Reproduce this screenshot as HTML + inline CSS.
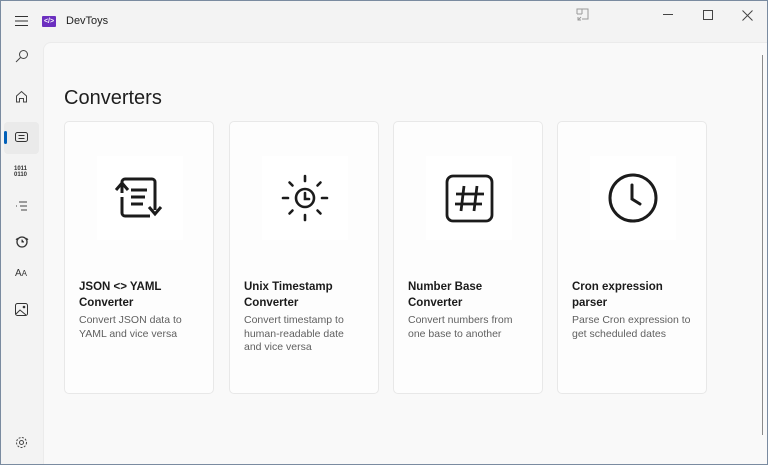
<!DOCTYPE html>
<html><head><style>
*{margin:0;padding:0;box-sizing:border-box}
body{width:768px;height:465px;overflow:hidden;background:#f3f3f3;font-family:"Segoe UI","Liberation Sans",sans-serif;position:relative;color:#1b1b1b}
.frame{position:absolute;inset:0;border:1px solid #7a8ba0;pointer-events:none;z-index:10}
.content{position:absolute;left:43px;top:42px;right:1px;bottom:1px;background:#f9f9f9;border-top:1px solid #ebebeb;border-left:1px solid #ebebeb;border-top-left-radius:8px}
h1{position:absolute;left:64px;top:87px;font-size:20px;font-weight:400;color:#1f1f1f}
.card{position:absolute;top:121px;width:150px;height:273px;background:#fdfdfd;border:1px solid #e8e8e8;border-radius:5px}
.ic{position:absolute;left:32px;top:34px;width:86px;height:84px;background:#fff;display:flex;align-items:center;justify-content:center}
.t{position:absolute;left:14px;top:158px;font-size:11.5px;font-weight:700;line-height:15.5px;width:125px}
.d{position:absolute;left:14px;top:192px;font-size:10.5px;color:#606060;line-height:13.5px;width:112px}
.sel{position:absolute;left:4px;top:122px;width:35px;height:32px;background:#eaeaea;border-radius:4px}
.bar{position:absolute;left:4px;top:131px;width:3px;height:13px;background:#005fb8;border-radius:2px}
</style></head><body>
<div class="frame"></div>
<svg style="position:absolute;left:14px;top:15px" width="15" height="12"><path d="M1 1.5h13M1 6h13M1 10.5h13" stroke="#333" stroke-width="1.1"/></svg>
<div style="position:absolute;left:42px;top:16px;width:14px;height:11px;background:#6b2fbf;border-radius:1px;color:#fff;font-size:7px;line-height:11px;text-align:center;font-weight:700">&lt;/&gt;</div>
<div style="position:absolute;left:66px;top:15px;font-size:11px;color:#222">DevToys</div>
<svg style="position:absolute;left:576px;top:8px" width="14" height="13"><path d="M1 6V1h5v5M6 1h6v10H6M1 6h5M2 12l3-3M2 9v3h3" stroke="#999" fill="none" stroke-width="1"/></svg>
<div style="position:absolute;left:663px;top:14px;width:10px;height:1px;background:#444"></div>
<div style="position:absolute;left:703px;top:10px;width:10px;height:10px;border:1px solid #444"></div>
<svg style="position:absolute;left:742px;top:10px" width="11" height="11"><path d="M.5.5l10 10M10.5.5l-10 10" stroke="#444"/></svg>
<svg style="position:absolute;left:15px;top:49px" width="14" height="14"><circle cx="8.5" cy="5.5" r="4" stroke="#444" fill="none"/><path d="M5.5 8.5L1 13" stroke="#444"/></svg>
<svg style="position:absolute;left:15px;top:90px" width="13" height="13"><path d="M1.5 6L6.5 1.5 11.5 6V12H8.5V8.5H4.5V12H1.5Z" stroke="#444" fill="none"/></svg>
<div class="sel"></div><div class="bar"></div>
<svg style="position:absolute;left:15px;top:131px" width="13" height="12"><rect x=".5" y="1.5" width="12" height="9" rx="2" stroke="#333" fill="none"/><path d="M3.5 4.5h6M3.5 7.5h6" stroke="#333"/></svg>
<div style="position:absolute;left:14px;top:166px;font-size:6px;line-height:6px;font-weight:700;color:#333">1011<br>0110</div>
<svg style="position:absolute;left:15px;top:200px" width="13" height="12"><path d="M4 2h8M5 6h7M6 10h6M1 6h1" stroke="#444"/></svg>
<svg style="position:absolute;left:15px;top:235px" width="14" height="13"><circle cx="7" cy="7" r="5" stroke="#333" fill="none" stroke-width="1.3"/><path d="M7 4.5V7h2M1 5l1.5-2M13 5l-1.5-2" stroke="#333"/></svg>
<div style="position:absolute;left:15px;top:268px;font-size:10px;color:#333">A<span style="font-size:8px">A</span></div>
<svg style="position:absolute;left:15px;top:303px" width="13" height="13"><rect x=".5" y=".5" width="12" height="12" rx="2" stroke="#333" fill="none"/><path d="M1 11l4-4 6 5" stroke="#333" fill="none"/><circle cx="9" cy="4" r="1.3" fill="#333"/></svg>
<svg style="position:absolute;left:15px;top:436px" width="13" height="13"><circle cx="6.5" cy="6.5" r="2" stroke="#444" fill="none"/><circle cx="6.5" cy="6.5" r="5" stroke="#444" fill="none" stroke-dasharray="2 1.4"/></svg>
<div class="content"></div>
<div style="position:absolute;left:762px;top:55px;width:1px;height:380px;background:#8a8a8a"></div>
<h1>Converters</h1>
<div class="card" style="left:64px"><div class="ic"><svg width="50" height="44" viewBox="0 0 50 44"><path d="M7 17V6a3 3 0 0 1 3-3h27a3 3 0 0 1 3 3v28M7 21v16a3 3 0 0 0 3 3h25" stroke="#1b1b1b" stroke-width="3" fill="none"/><path d="M1 14l6-7 6 7M34 31l6 7 6-7M16 14h16M16 21h14M16 28h12" stroke="#1b1b1b" stroke-width="3" fill="none"/></svg></div><div class="t">JSON &lt;&gt; YAML Converter</div><div class="d">Convert JSON data to YAML and vice versa</div></div>
<div class="card" style="left:229px"><div class="ic"><svg width="50" height="50" viewBox="0 0 50 50"><circle cx="25" cy="25" r="9" stroke="#1b1b1b" stroke-width="2.6" fill="none"/><path d="M25 20v6h4M25 3v5M25 42v5M3 25h5M42 25h5M9.5 9.5l3 3M37.5 37.5l3 3M40.5 9.5l-3 3M12.5 37.5l-3 3" stroke="#1b1b1b" stroke-width="2.6" stroke-linecap="round" fill="none"/></svg></div><div class="t">Unix Timestamp Converter</div><div class="d">Convert timestamp to human-readable date and vice versa</div></div>
<div class="card" style="left:393px"><div class="ic"><svg width="50" height="50" viewBox="0 0 50 50"><rect x="3" y="3" width="45" height="45" rx="6" stroke="#1b1b1b" stroke-width="2.8" fill="none"/><path d="M20 13l-3 25M33 13l-3 25M12 21h28M11 31h27" stroke="#1b1b1b" stroke-width="2.8" fill="none"/></svg></div><div class="t">Number Base Converter</div><div class="d">Convert numbers from one base to another</div></div>
<div class="card" style="left:557px"><div class="ic"><svg width="52" height="52" viewBox="0 0 52 52"><circle cx="26" cy="26" r="23" stroke="#1b1b1b" stroke-width="3" fill="none"/><path d="M25 13v14l8 5" stroke="#1b1b1b" stroke-width="3" stroke-linecap="round" fill="none"/></svg></div><div class="t">Cron expression parser</div><div class="d" style="width:128px">Parse Cron expression to get scheduled dates</div></div>
</body></html>
